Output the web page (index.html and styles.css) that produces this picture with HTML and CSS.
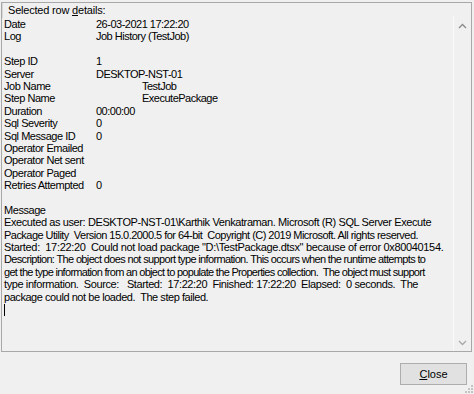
FILE: index.html
```html
<!DOCTYPE html>
<html>
<head>
<meta charset="utf-8">
<link rel="stylesheet" href="styles.css">
</head>
<body>
<div class="dialog">
  <div class="panel">
    <div class="content">
      <div class="caption">Selected row <u>d</u>etails:</div>
      <div class="row"><span class="k">Date</span><span class="v">26-03-2021 17:22:20</span></div>
      <div class="row"><span class="k">Log</span><span class="v">Job History (TestJob)</span></div>
      <div class="row blank"></div>
      <div class="row"><span class="k">Step ID</span><span class="v">1</span></div>
      <div class="row"><span class="k">Server</span><span class="v">DESKTOP-NST-01</span></div>
      <div class="row"><span class="k">Job Name</span><span class="v tab">TestJob</span></div>
      <div class="row"><span class="k">Step Name</span><span class="v tab">ExecutePackage</span></div>
      <div class="row"><span class="k">Duration</span><span class="v">00:00:00</span></div>
      <div class="row"><span class="k">Sql Severity</span><span class="v">0</span></div>
      <div class="row"><span class="k">Sql Message ID</span><span class="v">0</span></div>
      <div class="row"><span class="k">Operator Emailed</span></div>
      <div class="row"><span class="k">Operator Net sent</span></div>
      <div class="row"><span class="k">Operator Paged</span></div>
      <div class="row"><span class="k">Retries Attempted</span><span class="v">0</span></div>
      <div class="row blank"></div>
      <div class="row">Message</div>
      <div class="msg">
        <div class="line l1">Executed as user: DESKTOP-NST-01\Karthik Venkatraman. Microsoft (R) SQL Server Execute</div>
        <div class="line l2">Package Utility  Version 15.0.2000.5 for 64-bit  Copyright (C) 2019 Microsoft. All rights reserved.</div>
        <div class="line l3">Started:  17:22:20  Could not load package "D:\TestPackage.dtsx" because of error 0x80040154.</div>
        <div class="line l4">Description: The object does not support type information. This occurs when the runtime attempts to</div>
        <div class="line l5">get the type information from an object to populate the Properties collection.  The object must support</div>
        <div class="line l6">type information.  Source:   Started:  17:22:20  Finished: 17:22:20  Elapsed:  0 seconds.  The</div>
        <div class="line l7">package could not be loaded.  The step failed.</div>
      </div>
      <div class="caret"></div>
    </div>
    <div class="scrollbar">
      <svg class="arrow" width="9" height="6" viewBox="0 0 9 6"><path d="M1 5 L4.5 1.5 L8 5" fill="none" stroke="#8a8a8a" stroke-width="1.3"/></svg>
      <svg class="arrow" width="9" height="6" viewBox="0 0 9 6"><path d="M1 1 L4.5 4.5 L8 1" fill="none" stroke="#a8a8a8" stroke-width="1.3"/></svg>
    </div>
  </div>
  <div class="footer">
    <button class="btn"><u>C</u>lose</button>
    <svg class="grip" width="8" height="8" viewBox="0 0 8 8">
      <rect x="6" y="0" width="2" height="2" fill="#c4c4c4"/>
      <rect x="3" y="3" width="2" height="2" fill="#c4c4c4"/>
      <rect x="6" y="3" width="2" height="2" fill="#c4c4c4"/>
      <rect x="0" y="6" width="2" height="2" fill="#c4c4c4"/>
      <rect x="3" y="6" width="2" height="2" fill="#c4c4c4"/>
      <rect x="6" y="6" width="2" height="2" fill="#c4c4c4"/>
    </svg>
  </div>
</div>
</body>
</html>
```
FILE: styles.css
```css
html, body {
  margin: 0;
  padding: 0;
  background: #f0f0f0;
}
body {
  width: 474px;
  height: 394px;
  overflow: hidden;
  font-family: "Liberation Sans", Arial, sans-serif;
  font-size: 11px;
  color: #000;
}
.dialog {
  display: flex;
  flex-direction: column;
  height: 394px;
}
.panel {
  margin: 2px 2px 0 1px;
  height: 348px;
  border: 1px solid #a8a8a8;
  display: flex;
  background: #f0f0f0;
}
.content {
  flex: 1;
  min-width: 0;
  padding: 0 0 0 2px;
  letter-spacing: -0.45px;
}
.caption {
  height: 15px;
  line-height: 15px;
  padding-left: 5px;
  border-left: 1px solid #d8d8d8;
  margin-left: -2px;
  letter-spacing: -0.2px;
}
.caption u {
  text-decoration-thickness: 1px;
}
.row {
  display: flex;
  height: 12.4px;
  line-height: 12.4px;
  white-space: pre;
}
.k {
  width: 92px;
}
.v {
  letter-spacing: -0.5px;
}
.v.tab {
  padding-left: 46px;
}
.msg {
  line-height: 12.4px;
}
.line {
  white-space: pre;
  height: 12.4px;
}
.l1 { letter-spacing: -0.4px; }
.l2 { letter-spacing: -0.53px; }
.l3 { letter-spacing: -0.33px; }
.l4 { letter-spacing: -0.65px; }
.l5 { letter-spacing: -0.7px; }
.l6 { letter-spacing: -0.4px; }
.caret {
  width: 1px;
  height: 12px;
  background: #000;
  margin-top: 1px;
}
.scrollbar {
  width: 17px;
  margin-top: 13px;
  border-left: 1px solid #fafafa;
  display: flex;
  flex-direction: column;
  justify-content: space-between;
  align-items: center;
  padding: 7px 0 5px;
  background: #f0f0f0;
}
.footer {
  flex: 1;
  display: flex;
  justify-content: flex-end;
  align-items: flex-start;
  position: relative;
}
.btn {
  margin: 11px 7px 0 0;
  width: 67px;
  height: 22px;
  border: 1px solid #adadad;
  background: #e1e1e1;
  font-family: "Liberation Sans", Arial, sans-serif;
  font-size: 11px;
  color: #000;
  padding: 0;
}
.grip {
  position: absolute;
  right: 1px;
  bottom: 1px;
}
```
